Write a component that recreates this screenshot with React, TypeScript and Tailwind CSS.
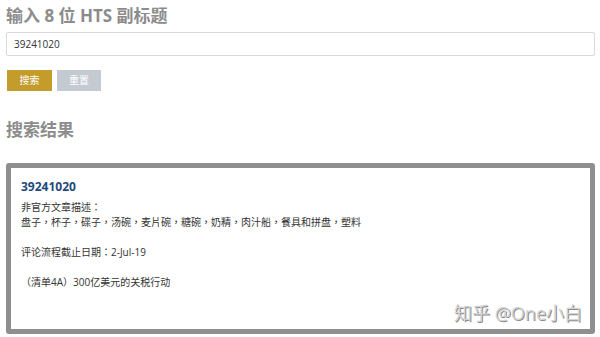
import React from "react";

export default function App() {
  const font = { fontFamily: '"Open Sans", Arial, "Noto Sans CJK SC", sans-serif' };
  const tc = { fontFamily: '"Open Sans", Arial, "Noto Sans CJK TC", sans-serif' };
  return (
    <div className="w-[600px] h-[337px] bg-white overflow-hidden px-[6px] pt-[4px]" style={font}>
      <h1 className="text-[17px] font-bold text-[#8c8c8c] leading-[24px] h-[25px]">输入 8 位 HTS 副标题</h1>
      <div className="mt-[3px] h-[24px] w-[589px] border border-[#d9d9d9] rounded-[2px] flex items-center pl-[7px] text-[10px] text-[#333]">
        39241020
      </div>
      <div className="mt-[14px] flex gap-[5px] pl-[1px]">
        <div className="w-[45px] h-[21px] bg-[#c49c2c] flex items-center justify-center text-[10px] text-white">搜索</div>
        <div className="w-[44px] h-[21px] bg-[#c4cad2] flex items-center justify-center text-[10px] text-white">重置</div>
      </div>
      <h2 className="mt-[27px] text-[17px] font-bold text-[#8c8c8c] leading-[24px]">搜索结果</h2>
      <div className="mt-[21px] w-[589px] h-[171px] border-[5px] border-[#8f8f8f] rounded-[3px] pl-[10px] pt-[11px] relative text-[10px] text-[#333]" style={tc}>
        <div className="text-[12px] font-bold text-[#1e4a7a] leading-[16px]" style={font}>39241020</div>
        <div className="mt-[5px] leading-[15px]">非官方文章描述：</div>
        <div className="leading-[15px]">盘子，杯子，碟子，汤碗，麦片碗，糖碗，奶精，肉汁船，餐具和拼盘，塑料</div>
        <div className="mt-[15px] leading-[15px]">评论流程截止日期：2-Jul-19</div>
        <div className="mt-[15px] leading-[15px]">（清单4A）300亿美元的关税行动</div>
        <div className="absolute right-[8px] bottom-[5px] text-[18px] text-[#d4d4d4] leading-[22px]" style={{ ...font, textShadow: "1px 1px 0 #8a8a8a" }}>
          知乎 @One小白
        </div>
      </div>
    </div>
  );
}
